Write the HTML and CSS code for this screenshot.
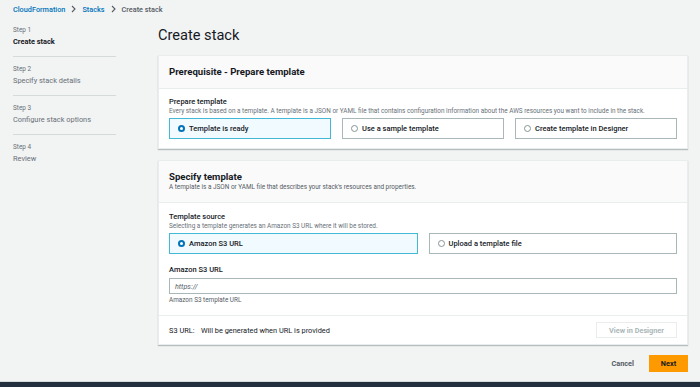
FILE: index.html
```html
<!DOCTYPE html>
<html lang="en">
<head>
<meta charset="utf-8">
<title>Create stack</title>
<link rel="stylesheet" href="styles.css">
</head>
<body>
<div class="page">
  <nav class="breadcrumb">
    <a class="crumb-link" href="#">CloudFormation</a>
    <svg class="chev" viewBox="0 0 5 8" width="5" height="8"><polyline points="1,1 4,4 1,7" fill="none" stroke="#545b64" stroke-width="1.1"/></svg>
    <a class="crumb-link" href="#">Stacks</a>
    <svg class="chev" viewBox="0 0 5 8" width="5" height="8"><polyline points="1,1 4,4 1,7" fill="none" stroke="#545b64" stroke-width="1.1"/></svg>
    <span class="crumb-current">Create stack</span>
  </nav>

  <div class="layout">
    <aside class="steps">
      <div class="step">
        <div class="step-num">Step 1</div>
        <div class="step-name current">Create stack</div>
      </div>
      <div class="step">
        <div class="step-num">Step 2</div>
        <div class="step-name">Specify stack details</div>
      </div>
      <div class="step">
        <div class="step-num">Step 3</div>
        <div class="step-name">Configure stack options</div>
      </div>
      <div class="step last">
        <div class="step-num">Step 4</div>
        <div class="step-name">Review</div>
      </div>
    </aside>

    <main class="content">
      <h1 class="title">Create stack</h1>

      <section class="card">
        <header class="card-head">
          <h2 class="card-title">Prerequisite - Prepare template</h2>
        </header>
        <div class="card-body">
          <div class="field-label">Prepare template</div>
          <div class="field-desc">Every stack is based on a template. A template is a JSON or YAML file that contains configuration information about the AWS resources you want to include in the stack.</div>
          <div class="tiles three">
            <div class="tile selected"><span class="radio on"></span><span class="tile-text">Template is ready</span></div>
            <div class="tile"><span class="radio"></span><span class="tile-text">Use a sample template</span></div>
            <div class="tile"><span class="radio"></span><span class="tile-text">Create template in Designer</span></div>
          </div>
        </div>
      </section>

      <section class="card">
        <header class="card-head">
          <h2 class="card-title">Specify template</h2>
          <div class="head-desc">A template is a JSON or YAML file that describes your stack's resources and properties.</div>
        </header>
        <div class="card-body">
          <div class="field-label">Template source</div>
          <div class="field-desc">Selecting a template generates an Amazon S3 URL where it will be stored.</div>
          <div class="tiles two">
            <div class="tile selected"><span class="radio on"></span><span class="tile-text">Amazon S3 URL</span></div>
            <div class="tile"><span class="radio"></span><span class="tile-text">Upload a template file</span></div>
          </div>
          <div class="field">
            <div class="field-label">Amazon S3 URL</div>
            <div class="input"><span class="placeholder">https://</span></div>
            <div class="help">Amazon S3 template URL</div>
          </div>
        </div>
        <div class="card-foot">
          <span class="s3-label">S3 URL:</span>
          <span class="s3-value">Will be generated when URL is provided</span>
          <span class="btn-disabled">View in Designer</span>
        </div>
      </section>

      <div class="actions">
        <span class="btn-link">Cancel</span>
        <span class="btn-primary">Next</span>
      </div>
    </main>
  </div>

  <div class="bottom-bar"></div>
</div>
</body>
</html>
```

FILE: styles.css
```css
html, body {
  margin: 0;
  padding: 0;
}
body {
  background: #f2f3f3;
  font-family: Roboto, "Liberation Sans", Arial, sans-serif;
  color: #16191f;
  width: 700px;
  height: 387px;
  overflow: hidden;
}
.page {
  display: flex;
  flex-direction: column;
  height: 387px;
}

/* breadcrumb */
.breadcrumb {
  height: 18px;
  display: flex;
  align-items: center;
  padding-left: 13px;
  font-size: 7.3px;
  gap: 6px;
}
.crumb-link {
  color: #0073bb;
  text-decoration: none;
  font-weight: 500;
}
.crumb-current {
  color: #545b64;
  font-weight: 500;
}
.chev {
  display: block;
}

/* layout */
.layout {
  display: flex;
  padding: 0 12px 0 13px;
  flex: 1;
}
.steps {
  width: 103px;
  flex: none;
}
.step {
  padding: 7px 0 8px;
  border-bottom: 1px solid #d5dbdb;
}
.step.last {
  border-bottom: none;
}
.step-num {
  font-size: 6.4px;
  line-height: 11px;
  color: #687078;
}
.step-name {
  font-size: 7.4px;
  line-height: 12px;
  color: #687078;
}
.step-name.current {
  color: #16191f;
  font-weight: 700;
}

.content {
  flex: 1;
  margin-left: 42px;
  display: flex;
  flex-direction: column;
}
.title {
  margin: 7px 0 10px;
  font-size: 14.6px;
  line-height: 20px;
  font-weight: 400;
  color: #16191f;
}

/* cards */
.card {
  background: #fff;
  border: 1px solid #eaeded;
  box-shadow: 0 1px 1px 0 rgba(0, 28, 36, 0.25);
  margin-bottom: 11px;
}
.card-head {
  background: #fafafa;
  border-bottom: 1px solid #eaeded;
  padding: 9px 10px 10px;
}
.card-title {
  margin: 0;
  font-size: 9.6px;
  line-height: 13px;
  font-weight: 700;
}
.head-desc {
  font-size: 6.4px;
  line-height: 9px;
  color: #545b64;
}
.card-body {
  padding: 8px 10px 9px;
}
.card + .card .card-body {
  padding: 9px 10px 10px;
}
.field-label {
  font-size: 7.5px;
  line-height: 10px;
  font-weight: 500;
}
.field-desc {
  font-size: 6.4px;
  line-height: 9px;
  color: #687078;
}
.tiles {
  display: grid;
  gap: 11px;
  margin-top: 2px;
}
.tiles.three {
  grid-template-columns: 1fr 1fr 1fr;
}
.tiles.two {
  grid-template-columns: 1fr 1fr;
}
.tile {
  height: 21px;
  box-sizing: border-box;
  border: 1px solid #aab7b8;
  background: #fff;
  display: flex;
  align-items: center;
  padding-left: 8px;
  gap: 4px;
}
.tile.selected {
  border-color: #44b9d6;
  background: #f1faff;
}
.tile-text {
  font-size: 7.5px;
  font-weight: 500;
  color: #16191f;
}
.radio {
  width: 7px;
  height: 7px;
  box-sizing: border-box;
  border-radius: 50%;
  border: 1px solid #879596;
  background: #fff;
  flex: none;
}
.radio.on {
  border: 2.2px solid #0073bb;
}

.field {
  margin-top: 11px;
}
.input {
  margin-top: 3px;
  height: 16px;
  box-sizing: border-box;
  border: 1px solid #aab7b8;
  display: flex;
  align-items: center;
  padding-left: 5px;
}
.placeholder {
  font-size: 7.2px;
  font-style: italic;
  color: #545b64;
}
.help {
  margin-top: 2px;
  font-size: 6.4px;
  line-height: 9px;
  color: #545b64;
}

.card-foot {
  border-top: 1px solid #eaeded;
  display: flex;
  align-items: center;
  padding: 6px 10px 6px;
  font-size: 7.4px;
}
.s3-label {
  width: 32px;
  color: #16191f;
}
.s3-value {
  flex: 1;
  color: #16191f;
}
.btn-disabled {
  height: 16px;
  width: 81px;
  box-sizing: border-box;
  border: 1px solid #eaeded;
  display: flex;
  align-items: center;
  justify-content: center;
  color: #aab7b8;
  font-weight: 700;
  font-size: 7.3px;
}

.actions {
  display: flex;
  justify-content: flex-end;
  align-items: center;
  gap: 15px;
  margin-top: -1px;
}
.btn-link {
  font-size: 7.3px;
  font-weight: 700;
  color: #545b64;
}
.btn-primary {
  width: 39px;
  height: 17px;
  background: #ff9900;
  display: flex;
  align-items: center;
  justify-content: center;
  font-size: 7.3px;
  font-weight: 700;
  color: #16191f;
}

.bottom-bar {
  height: 5px;
  background: #232f3e;
  border-top: 1px solid #d5dbdb;
  flex: none;
}
```
